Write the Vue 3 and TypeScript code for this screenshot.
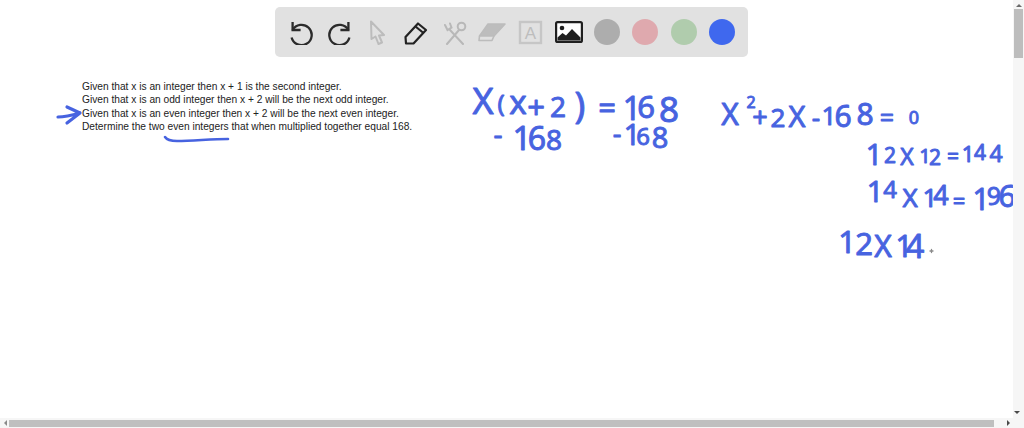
<script setup lang="ts">
// One glyph of the handwriting: character, centre x, baseline y, font size.
type Glyph = [string, number, number, number]

const lines: string[] = [
  'Given that x is an integer then x + 1 is the second integer.',
  'Given that x is an odd integer then x + 2 will be the next odd integer.',
  'Given that x is an even integer then x + 2 will be the next even integer.',
  'Determine the two even integers that when multiplied together equal 168.',
]

const ink: Glyph[][] = [
  [['X', 483, 114, 36], ['(', 501, 112, 24], ['x', 518, 114, 33], ['+', 536, 118, 31], ['2', 558, 117, 28], [')', 580, 118, 36],
   ['=', 607, 119, 31], ['1', 632, 120, 32], ['6', 646, 118, 31], ['8', 669, 122, 35]],
  [['-', 498, 144, 28], ['1', 522, 150, 33], ['6', 537, 150, 32], ['8', 554, 150, 28]],
  [['-', 617, 143, 27], ['1', 632, 145, 29], ['6', 643, 145, 24], ['8', 660, 148, 29]],
  [['X', 730, 125, 30], ['2', 751, 108, 16], ['+', 760, 127, 27], ['2', 778, 127, 26], ['X', 797, 127, 29], ['-', 816, 127, 26],
   ['1', 829, 125, 26], ['6', 843, 127, 30], ['8', 865, 125, 30], ['=', 887, 127, 25], ['0', 914, 124, 18]],
  [['1', 874, 165, 29], ['2', 890, 163, 21], ['X', 907, 165, 23], ['1', 925, 163, 20], ['2', 935, 165, 21], ['=', 953, 164, 21],
   ['1', 968, 162, 22], ['4', 980, 160, 21], ['4', 996, 162, 23]],
  [['1', 875, 202, 29], ['4', 890, 198, 24], ['X', 910, 207, 26], ['1', 930, 207, 26], ['4', 941, 205, 27], ['=', 959, 209, 22],
   ['1', 981, 210, 30], ['9', 994, 205, 25], ['6', 1007, 207, 30]],
  [['1', 847, 253, 31], ['2', 864, 255, 31], ['X', 883, 257, 30], ['1', 904, 257, 30], ['4', 915, 258, 33]],
]

const joined = (g: Glyph[]): string => g.map((c) => c[0]).join('')
</script>

<template>
  <div class="page">
    <div class="toolbar">
      <svg class="tool" viewBox="0 0 25 25" fill="none" stroke="#2b2b2b" stroke-width="2.3">
        <path d="M3.6 2v8h8" /><path d="M3.6 10A10.2 10.2 0 1 1 2.6 17.5" />
      </svg>
      <svg class="tool" viewBox="0 0 25 25" fill="none" stroke="#2b2b2b" stroke-width="2.3">
        <path d="M21.4 2v8h-8" /><path d="M21.4 10A10.2 10.2 0 1 0 22.4 17.5" />
      </svg>
      <svg class="tool" viewBox="0 0 25 25" fill="none" stroke="#bcbcbc" stroke-width="2" stroke-linejoin="round">
        <path d="M6 1.500l13 13.500-5 .5 3 7-3.500 1.500-3-7.500L6.500 19z" />
      </svg>
      <svg class="tool" viewBox="0 0 25 25" fill="none" stroke="#222" stroke-width="2.2" stroke-linejoin="round">
        <path d="M2.500 17L15 3.500l8 6.500-12.500 13.500H3z" /><path d="M12.500 6.500l8 6.500" />
      </svg>
      <svg class="tool" viewBox="0 0 25 25" fill="none" stroke="#b8b8b8" stroke-width="2" stroke-linecap="round">
        <path d="M5 24L17 10M21 24L8 10M3 5l2.500 5 4-2.500-1.500-4" /><circle cx="19.500" cy="6.500" r="3.800" />
      </svg>
      <svg class="tool eraser" viewBox="0 0 28 20" fill="none" stroke="#bcbcbc" stroke-width="1.6" stroke-linejoin="round">
        <path d="M10 2h17L16 14H1.500z" fill="#bdbdbd" /><path d="M1.500 14l-.5 4.500h13L16 14" />
      </svg>
      <svg class="tool" viewBox="0 0 25 25" fill="none">
        <rect x="2" y="2" width="21" height="21" stroke="#c6c6c6" stroke-width="2.400" />
        <text x="12.500" y="19" class="boxed-a" text-anchor="middle">A</text>
      </svg>
      <svg class="tool picture" viewBox="0 0 28 22" fill="#fff" stroke="#1f1f1f" stroke-width="2.200">
        <rect x="1.100" y="1.100" width="25.800" height="19.800" rx="1.500" />
        <circle cx="7" cy="7" r="2.300" fill="#1f1f1f" stroke="none" />
        <path d="M2.500 19.500v-3l5-4.500 3.500 2.500 6-6.500 8.500 8.500v3z" fill="#1f1f1f" stroke="none" />
      </svg>
      <span class="dot grey"></span>
      <span class="dot pink"></span>
      <span class="dot green"></span>
      <span class="dot blue"></span>
    </div>

    <div class="problem">
      <p v-for="line in lines" :key="line">{{ line }}</p>
    </div>

    <svg class="board" viewBox="0 0 1024 428">
      <g class="strokes">
        <path d="M58 117c8 0 15-2 22-4M67 107l13 6-13 10" stroke-width="3.200" />
        <path d="M165 137c2 3 6 4 12 4 16 0 34-2 51-2" stroke-width="2.600" />
        <path d="M930 251h3M931.500 249.500v3" class="cursor" stroke-width="1.300" />
      </g>
      <text v-for="(row, r) in ink" :key="r" class="ink" :aria-label="joined(row)">
        <tspan v-for="(g, i) in row" :key="i" :x="g[1]" :y="g[2]" :font-size="g[3]">{{ g[0] }}</tspan>
      </text>
    </svg>

    <div class="vbar">
      <i class="arrow up"></i>
      <div class="vthumb"></div>
    </div>
    <div class="hbar">
      <i class="arrow left"></i>
      <div class="hthumb"></div>
      <i class="arrow right"></i>
    </div>
    <i class="arrow down"></i>
  </div>
</template>

<style>
html, body { margin: 0; background: #fff; overflow: hidden; }
</style>

<style scoped>
.page {
  position: relative;
  width: 1024px;
  height: 428px;
  overflow: hidden;
  background: #fff;
  font-family: "Liberation Sans", Arial, sans-serif;
}
.toolbar {
  position: absolute;
  left: 275px;
  top: 7px;
  width: 473px;
  height: 50px;
  box-sizing: border-box;
  padding: 0 7px;
  display: grid;
  grid-template-columns: repeat(12, 1fr);
  align-items: center;
  justify-items: center;
  background: #e1e1e1;
  border-radius: 5px;
}
.tool { width: 25px; height: 25px; }
.tool.eraser { width: 28px; height: 20px; }
.tool.picture { width: 28px; height: 22px; }
.boxed-a { font-family: "Liberation Sans", sans-serif; font-size: 17px; fill: #bdbdbd; }
.dot { width: 26px; height: 26px; border-radius: 50%; }
.grey { background: #adadad; }
.pink { background: #dfa9ae; }
.green { background: #b0ccad; }
.blue { background: #3f68ee; }
.problem {
  position: absolute;
  left: 82px;
  top: 80px;
  font-size: 10.2px;
  line-height: 13.4px;
  color: #222;
}
.problem p { margin: 0; white-space: nowrap; }
.board { position: absolute; left: 0; top: 0; width: 1024px; height: 428px; }
.strokes { fill: none; stroke: #4763e0; stroke-linecap: round; stroke-linejoin: round; }
.strokes .cursor { stroke: #8a8a8a; }
.ink {
  font-family: "Noto Sans", sans-serif;
  text-anchor: middle;
  fill: #4763e0;
  stroke: #4763e0;
  stroke-width: 0.9px;
  stroke-linejoin: round;
}
.vbar { position: absolute; right: 0; top: 0; width: 11px; height: 418px; background: #f6f6f6; }
.vthumb { margin: 9px 1px 0 1px; height: 49px; background: #bdbdbd; }
.hbar { position: absolute; left: 0; bottom: 0; width: 1024px; height: 10px; background: #f6f6f6; }
.hthumb { margin: 2px 30px 0 9px; height: 7px; background: #bfbfbf; }
.arrow { position: absolute; width: 0; height: 0; border: 3px solid transparent; }
.up { left: 3px; top: 1px; border-bottom-color: #6a6a6a; }
.left { left: 1px; top: 2px; border-right-color: #8a8a8a; }
.right { left: 1007px; top: 2px; border-left-color: #4a4a4a; }
.down { left: 1014px; top: 411px; border-top-color: #4a4a4a; }
</style>
